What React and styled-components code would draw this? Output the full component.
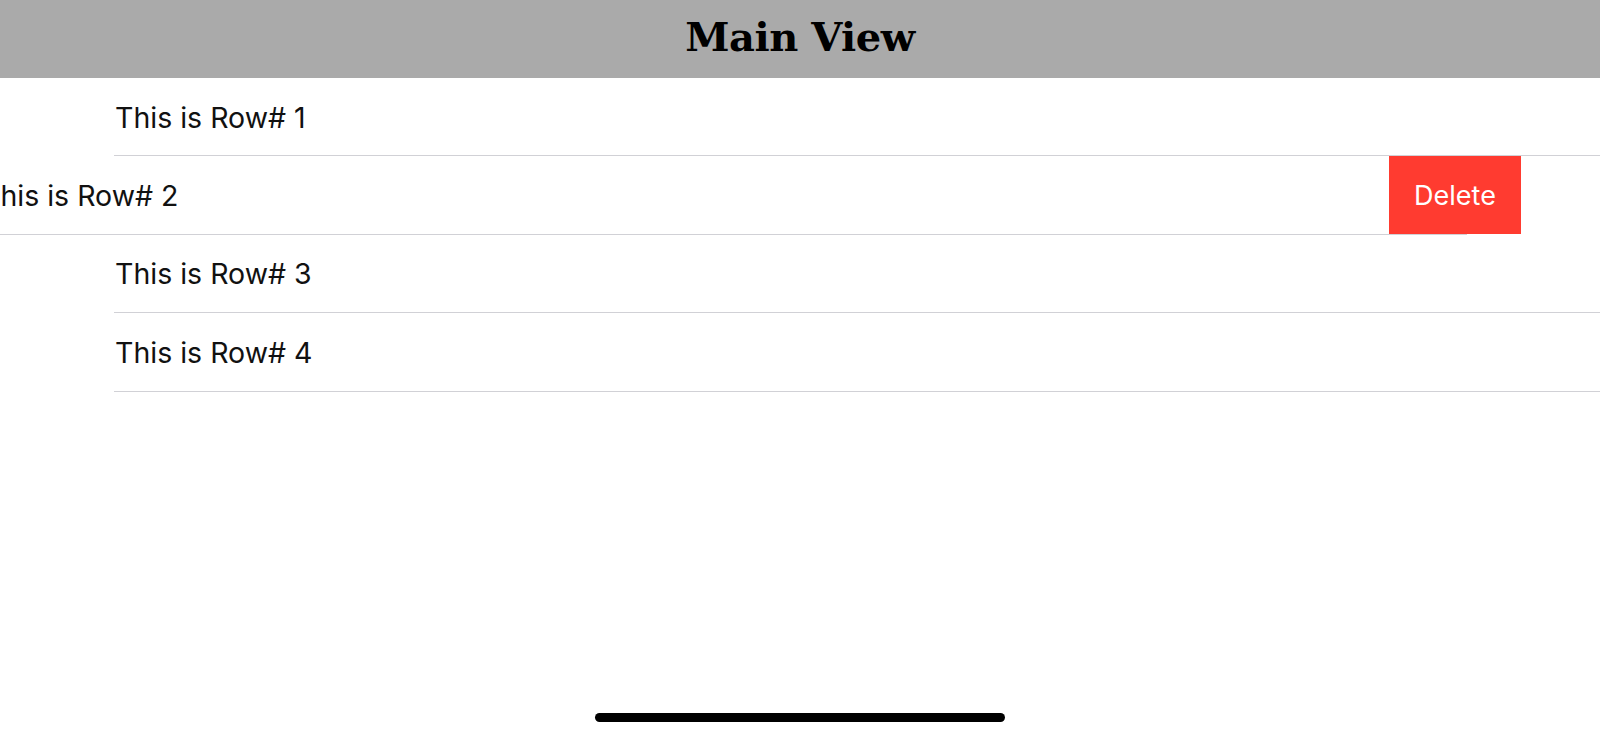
import React from 'react';
import styled, { createGlobalStyle } from 'styled-components';

const GlobalStyle = createGlobalStyle`
  html, body {
    margin: 0;
    padding: 0;
    background: #fff;
  }
  * {
    box-sizing: border-box;
  }
`;

const Screen = styled.div`
  width: 100%;
  height: 739px;
  display: flex;
  flex-direction: column;
  overflow: hidden;
  background: #fff;
  font-family: Inter, "Noto Sans", "Liberation Sans", sans-serif;
`;

const Header = styled.header`
  height: 78px;
  flex-shrink: 0;
  background-color: #aaaaaa;
  display: flex;
  align-items: center;
  justify-content: center;
  padding-bottom: 6px;
`;

const Title = styled.h1`
  margin: 0;
  font-family: "DejaVu Serif", "Liberation Serif", serif;
  font-weight: bold;
  font-size: 40px;
  letter-spacing: -0.5px;
  color: #000;
`;

const List = styled.ul`
  flex: 1;
  list-style: none;
  margin: 0;
  padding: 0;
`;

const Row = styled.li`
  position: relative;
  height: 78.4px;
  overflow: hidden;
`;

const RowContent = styled.div`
  height: 100%;
  display: flex;
  align-items: center;
  padding-left: 115px;
  transform: translateX(${(p) => -p.offset}px);
  font-size: 28.5px;
  color: #111;

  &::after {
    content: '';
    position: absolute;
    left: 114px;
    right: 0;
    bottom: 0;
    height: 1px;
    background: #d1d1d6;
  }
`;

const DeleteAction = styled.button`
  position: absolute;
  top: 0;
  left: 1389px;
  width: 132px;
  height: 78px;
  border: none;
  background-color: #ff3b30;
  color: #fff;
  font-family: Inter, "Noto Sans", "Liberation Sans", sans-serif;
  font-size: 27px;
  padding: 0;
`;

const HomeBar = styled.div`
  display: flex;
  justify-content: center;
  padding-bottom: 17px;
`;

const Indicator = styled.div`
  width: 410px;
  height: 9px;
  border-radius: 5px;
  background: #000;
`;

const rows = [
  { id: 1, offset: 0 },
  { id: 2, offset: 133 },
  { id: 3, offset: 0 },
  { id: 4, offset: 0 },
];

export default function App() {
  return (
    <>
      <GlobalStyle />
      <Screen>
        <Header>
          <Title>Main View</Title>
        </Header>
        <List>
          {rows.map((row) => (
            <Row key={row.id}>
              <RowContent offset={row.offset}>This is Row# {row.id}</RowContent>
              {row.offset > 0 && <DeleteAction>Delete</DeleteAction>}
            </Row>
          ))}
        </List>
        <HomeBar>
          <Indicator />
        </HomeBar>
      </Screen>
    </>
  );
}
